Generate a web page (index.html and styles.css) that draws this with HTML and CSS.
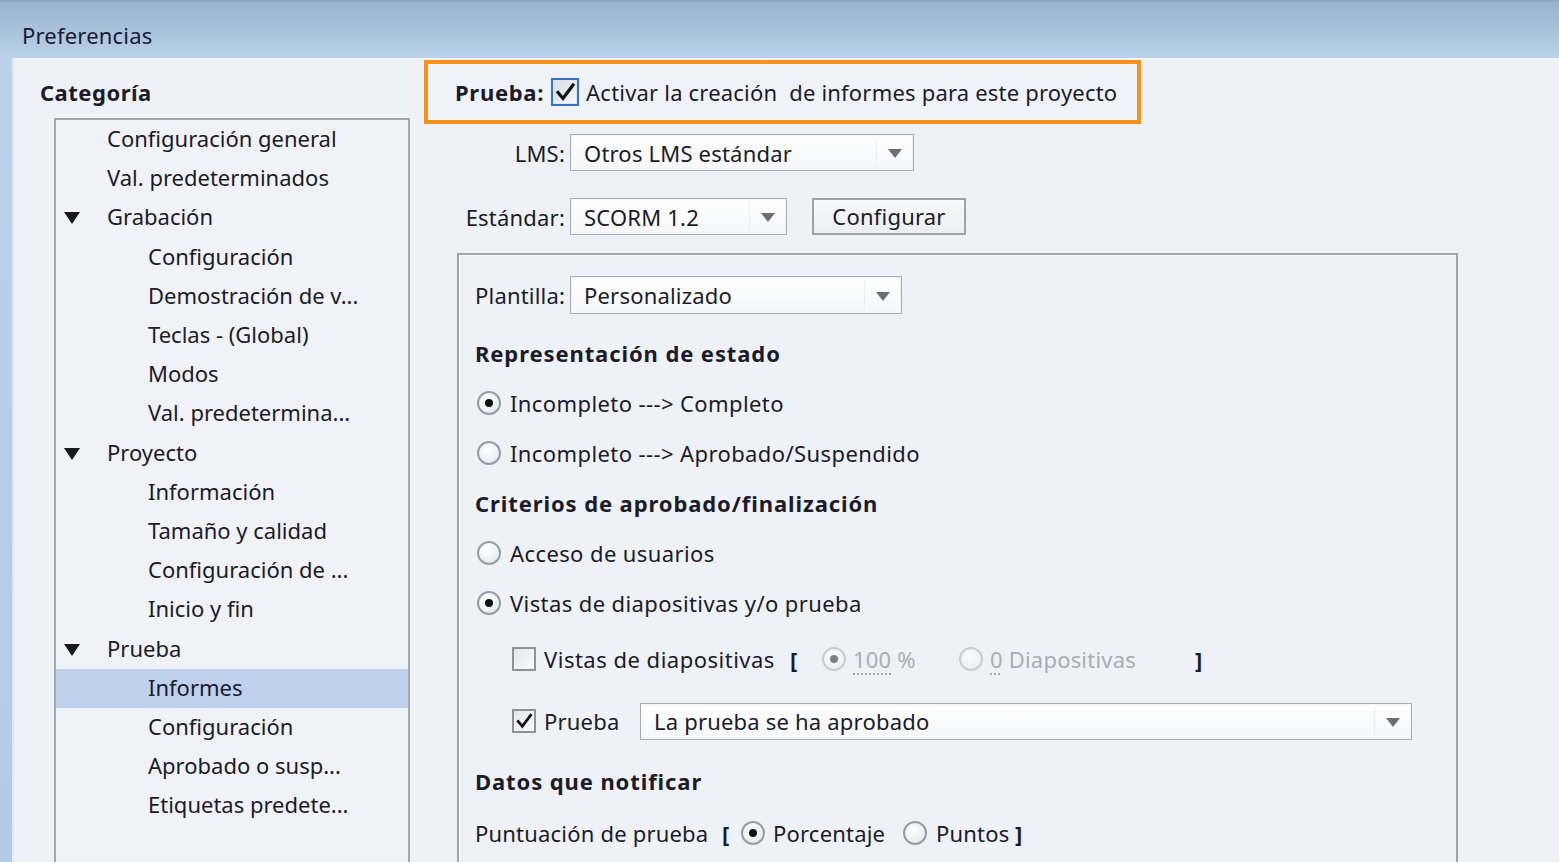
FILE: index.html
```html
<!DOCTYPE html>
<html lang="es">
<head>
<meta charset="utf-8">
<title>Preferencias</title>
<link rel="stylesheet" href="styles.css">
</head>
<body>
<div class="window">
  <div class="titlebar"><span class="title">Preferencias</span></div>
  <div class="frame">
    <div class="frame-edge"></div>
    <div class="client">
      <aside class="category">
        <h2 class="category-title">Categoría</h2>
        <ul class="tree">
          <li class="row l1">Configuración general</li>
          <li class="row l1">Val. predeterminados</li>
          <li class="row l1 open"><span class="caret"></span>Grabación</li>
          <li class="row l2">Configuración</li>
          <li class="row l2">Demostración de v...</li>
          <li class="row l2">Teclas - (Global)</li>
          <li class="row l2">Modos</li>
          <li class="row l2">Val. predetermina...</li>
          <li class="row l1 open"><span class="caret"></span>Proyecto</li>
          <li class="row l2">Información</li>
          <li class="row l2">Tamaño y calidad</li>
          <li class="row l2">Configuración de ...</li>
          <li class="row l2">Inicio y fin</li>
          <li class="row l1 open"><span class="caret"></span>Prueba</li>
          <li class="row l2 selected">Informes</li>
          <li class="row l2">Configuración</li>
          <li class="row l2">Aprobado o susp...</li>
          <li class="row l2">Etiquetas predete...</li>
        </ul>
      </aside>

      <main class="settings">
        <div class="enable-box">
          <span class="strong">Prueba:</span>
          <span class="check check-focus checked">
            <svg viewBox="0 0 24 24" class="tick"><path d="M5 12.5 L10 18.5 L20 5"/></svg>
          </span>
          <span class="enable-label">Activar la creación&nbsp; de informes para este proyecto</span>
        </div>

        <div class="field-row lms-row">
          <span class="field-label">LMS:</span>
          <div class="select select-lms"><span class="select-text">Otros LMS estándar</span><span class="select-sep"></span><span class="arrow"></span></div>
        </div>

        <div class="field-row std-row">
          <span class="field-label">Estándar:</span>
          <div class="select select-std"><span class="select-text">SCORM 1.2</span><span class="select-sep"></span><span class="arrow"></span></div>
          <button class="button">Configurar</button>
        </div>

        <section class="group">
          <div class="line template-row">
            <span class="template-label">Plantilla:</span>
            <div class="select select-tpl"><span class="select-text">Personalizado</span><span class="select-sep"></span><span class="arrow"></span></div>
          </div>

          <div class="line heading first-heading">Representación de estado</div>
          <div class="line option"><span class="radio checked"></span>Incompleto ---&gt; Completo</div>
          <div class="line option"><span class="radio"></span>Incompleto ---&gt; Aprobado/Suspendido</div>

          <div class="line heading">Criterios de aprobado/finalización</div>
          <div class="line option"><span class="radio"></span>Acceso de usuarios</div>
          <div class="line option"><span class="radio checked"></span>Vistas de diapositivas y/o prueba</div>

          <div class="line sub slides-row">
            <span class="check"></span>
            <span class="sub-label slides-label">Vistas de diapositivas</span>
            <span class="bracket">[</span>
            <span class="radio disabled checked pct-radio"></span>
            <span class="muted pct-text"><span class="key">100</span> %</span>
            <span class="radio disabled slides-radio"></span>
            <span class="muted slides-text"><span class="key">0</span> Diapositivas</span>
            <span class="bracket">]</span>
          </div>

          <div class="line sub quiz-row">
            <span class="check checked">
              <svg viewBox="0 0 24 24" class="tick"><path d="M5 12.5 L10 18.5 L20 5"/></svg>
            </span>
            <span class="sub-label quiz-label">Prueba</span>
            <div class="select select-quiz"><span class="select-text">La prueba se ha aprobado</span><span class="select-sep"></span><span class="arrow"></span></div>
          </div>

          <div class="line heading data-heading">Datos que notificar</div>
          <div class="line score-row">
            <span class="score-label">Puntuación de prueba</span>
            <span class="bracket">[</span>
            <span class="radio checked pct-score-radio"></span>
            <span class="pct-score-text">Porcentaje</span>
            <span class="radio points-radio"></span>
            <span class="points-text">Puntos</span>
            <span class="bracket">]</span>
          </div>
        </section>
      </main>
    </div>
  </div>
</div>
</body>
</html>
```

FILE: styles.css
```css
html, body {
  margin: 0;
  padding: 0;
  height: 862px;
  overflow: hidden;
  background: #eef1f6;
}

body {
  font-family: "Noto Sans", "Open Sans", sans-serif;
  font-size: 22px;
  color: #1b1b2a;
}

.window {
  width: 1559px;
  height: 862px;
  display: flex;
  flex-direction: column;
}

/* Window caption */
.titlebar {
  height: 56px;
  flex: none;
  border-top: 2px solid #8fa5bd;
  background: linear-gradient(#99b3cf, #b9d1e9);
  display: flex;
  align-items: center;
  padding-left: 22px;
}

.title {
  font-size: 22px;
  letter-spacing: 0.2px;
  color: #1b1b30;
  position: relative;
  top: 5px;
}

.frame {
  flex: 1;
  display: flex;
  min-height: 0;
}

.frame-edge {
  width: 12px;
  flex: none;
  background: linear-gradient(#b9d1e9, #b3cbe5);
  border-right: 2px solid #dfe7f1;
}

.client {
  flex: 1;
  display: flex;
  background: #eef1f6;
  border-top: 1px solid #f5f7fb;
}

/* Category tree */
.category {
  width: 410px;
  flex: none;
  display: flex;
  flex-direction: column;
}

.category-title {
  margin: 0;
  height: 53px;
  padding: 6px 0 0 26px;
  display: flex;
  align-items: center;
  font-size: 22px;
  font-weight: 700;
  letter-spacing: 0.5px;
}

.tree {
  list-style: none;
  margin: 0 0 0 40px;
  padding: 0;
  width: 356px;
  box-sizing: border-box;
  flex: 1;
  border: 2px solid #a2a6ae;
  border-bottom: none;
  background: #f0f2f7;
}

.row {
  height: 39.2px;
  box-sizing: border-box;
  padding-bottom: 3px;
  display: flex;
  align-items: center;
  white-space: nowrap;
}

.row.l1 { padding-left: 51px; }
.row.l1.open { padding-left: 8px; }
.row.l2 { padding-left: 92px; }

.row.selected {
  background: #bdd0ec;
}

.caret {
  width: 0;
  height: 0;
  border-left: 8px solid transparent;
  border-right: 8px solid transparent;
  border-top: 12px solid #1a1a1a;
  margin-right: 27px;
  margin-top: 4px;
}

/* Right-hand settings */
.settings {
  flex: 1;
  padding-top: 1px;
  display: flex;
  flex-direction: column;
  align-items: flex-start;
  letter-spacing: 0.2px;
}

.enable-box {
  width: 717px;
  height: 64px;
  box-sizing: border-box;
  border: 4px solid #f7921e;
  display: flex;
  align-items: center;
  padding-left: 27px;
  background: #eff2f8;
}

.strong {
  font-weight: 700;
  letter-spacing: 0.7px;
  margin-right: 7px;
}

.enable-label {
  margin-left: 7px;
}

.check {
  width: 24px;
  height: 24px;
  box-sizing: border-box;
  border: 2px solid #8e9298;
  background: linear-gradient(135deg, #e3e5e9, #fbfbfc);
  display: inline-flex;
  align-items: center;
  justify-content: center;
  flex: none;
}

.check-focus {
  width: 28px;
  height: 28px;
  border: 2px solid #3573c9;
  box-shadow: inset 0 0 0 1px #dfe6f2;
  background: linear-gradient(135deg, #d8dbe1, #f7f8fa);
}

.tick {
  width: 100%;
  height: 100%;
  overflow: visible;
}

.tick path {
  fill: none;
  stroke: #111;
  stroke-width: 3.2;
  stroke-linecap: square;
}

.field-row {
  display: flex;
  align-items: center;
}

.field-label {
  width: 141px;
  text-align: right;
  padding-right: 5px;
  flex: none;
}

.lms-row {
  margin-top: 10px;
  height: 37px;
}

.std-row {
  margin-top: 27px;
  height: 37px;
}

.select {
  height: 37px;
  box-sizing: border-box;
  border: 1px solid #a7adb6;
  background: linear-gradient(#ffffff, #f6f7f9);
  box-shadow: inset 0 0 0 1px #f2f3f5;
  display: flex;
  align-items: center;
  flex: none;
}

.select-text {
  padding-left: 13px;
  flex: 1;
  white-space: nowrap;
}

.select-sep {
  width: 1px;
  align-self: stretch;
  margin: 3px 0;
  background: #eceef1;
}

.arrow {
  width: 0;
  height: 0;
  border-left: 7px solid transparent;
  border-right: 7px solid transparent;
  border-top: 9px solid #6a6f77;
  margin: 2px 11px 0 11px;
}

.select-lms { width: 344px; }
.select-std { width: 217px; }
.select-tpl { width: 332px; height: 38px; }
.select-quiz { width: 772px; }

.button {
  margin-left: 25px;
  width: 154px;
  height: 37px;
  box-sizing: border-box;
  border: 2px solid #9ea3ab;
  background: linear-gradient(#f8f9fb, #eceef2);
  font: inherit;
  letter-spacing: inherit;
  color: inherit;
  padding: 0 0 1px;
}

/* Reporting group */
.group {
  margin: 18px 0 0 33px;
  width: 1001px;
  flex: 1;
  box-sizing: border-box;
  border: 2px solid #a0a5ad;
  border-bottom: none;
  box-shadow: inset 1px 1px 0 #fbfcfd;
  padding-left: 16px;
}

.line {
  display: flex;
  align-items: center;
  white-space: nowrap;
  height: 50px;
}

.template-row {
  margin-top: 21px;
  height: 38px;
}

.template-label {
  width: 95px;
  flex: none;
}

.heading {
  font-weight: 700;
  letter-spacing: 0.9px;
}

.first-heading { margin-top: 14px; }

.option {
  letter-spacing: 0.4px;
}

.radio {
  width: 24px;
  height: 24px;
  box-sizing: border-box;
  border-radius: 50%;
  border: 2px solid #979ca4;
  background: radial-gradient(circle at 40% 35%, #ffffff, #e1e4e9);
  display: inline-flex;
  align-items: center;
  justify-content: center;
  flex: none;
}

.radio.checked::after {
  content: "";
  width: 8px;
  height: 8px;
  border-radius: 50%;
  background: #111;
}

.radio.disabled {
  border-color: #c9cdd3;
  background: radial-gradient(circle at 40% 35%, #fbfbfc, #e9ebef);
}

.radio.disabled.checked::after {
  background: #7a7d82;
}

.option .radio {
  margin: 0 9px 0 2px;
}

.sub .check {
  margin-left: 37px;
  margin-right: 8px;
}

.slides-row { margin-top: 6px; }

.bracket {
  font-weight: 700;
  width: 10px;
  flex: none;
}

.slides-label { width: 246px; flex: none; letter-spacing: 0.5px; }
.pct-radio { margin-left: 22px; margin-right: 7px; }
.pct-text { width: 106px; flex: none; }
.slides-radio { margin-right: 7px; }
.slides-text { width: 205px; flex: none; }

.muted {
  color: #a8adb5;
}

.key {
  text-decoration: underline dotted #a8adb5;
  text-underline-offset: 5px;
}

.quiz-row { margin-top: 12px; }
.quiz-label { width: 96px; flex: none; }

.data-heading { margin-top: 10px; }

.score-row { margin-top: 2px; }
.score-label { width: 247px; flex: none; }
.pct-score-radio { margin-left: 9px; margin-right: 8px; }
.pct-score-text { width: 130px; flex: none; }
.points-radio { margin-right: 9px; }
.points-text { width: 79px; flex: none; }
```
